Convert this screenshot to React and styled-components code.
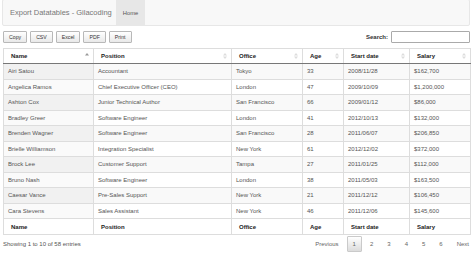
import React from "react";
import styled, { createGlobalStyle } from "styled-components";

const rows = [
  ["Airi Satou", "Accountant", "Tokyo", "33", "2008/11/28", "$162,700"],
  ["Angelica Ramos", "Chief Executive Officer (CEO)", "London", "47", "2009/10/09", "$1,200,000"],
  ["Ashton Cox", "Junior Technical Author", "San Francisco", "66", "2009/01/12", "$86,000"],
  ["Bradley Greer", "Software Engineer", "London", "41", "2012/10/13", "$132,000"],
  ["Brenden Wagner", "Software Engineer", "San Francisco", "28", "2011/06/07", "$206,850"],
  ["Brielle Williamson", "Integration Specialist", "New York", "61", "2012/12/02", "$372,000"],
  ["Brock Lee", "Customer Support", "Tampa", "27", "2011/01/25", "$112,000"],
  ["Bruno Nash", "Software Engineer", "London", "38", "2011/05/03", "$163,500"],
  ["Caesar Vance", "Pre-Sales Support", "New York", "21", "2011/12/12", "$106,450"],
  ["Cara Stevens", "Sales Assistant", "New York", "46", "2011/12/06", "$145,600"],
];

const columns = [
  { title: "Name", width: 90 },
  { title: "Position", width: 138 },
  { title: "Office", width: 71 },
  { title: "Age", width: 41 },
  { title: "Start date", width: 66 },
  { title: "Salary", width: 61 },
];

const GlobalStyle = createGlobalStyle`
  body {
    margin: 0;
    background: #fff;
    font-family: "Liberation Sans", Arial, sans-serif;
    color: #333;
  }
`;

const Page = styled.div`
  width: 474px;
  padding: 0 4px 0 2px;
  box-sizing: border-box;
`;

const Navbar = styled.nav`
  height: 27px;
  margin-top: -1px;
  display: flex;
  align-items: stretch;
  background: #f8f8f8;
  border: 1px solid #e7e7e7;
  border-radius: 2px;
  box-sizing: border-box;
`;

const Brand = styled.span`
  display: flex;
  align-items: center;
  padding: 0 4px 0 7px;
  font-size: 7.5px;
  color: #777;
`;

const NavItem = styled.span`
  display: flex;
  align-items: center;
  padding: 0 7px;
  font-size: 5.8px;
  color: #555;
  background: ${(p) => (p.active ? "#e7e7e7" : "transparent")};
`;

const Toolbar = styled.div`
  display: flex;
  align-items: center;
  justify-content: space-between;
  margin-top: 5px;
  padding-left: 1px;
`;

const ButtonGroup = styled.div`
  display: flex;
  gap: 3px;
`;

const ExportButton = styled.button`
  height: 12px;
  padding: 0 5px;
  font-family: inherit;
  font-size: 5.2px;
  color: #333;
  background: linear-gradient(to bottom, #ffffff 0%, #e9e9e9 100%);
  border: 1px solid #b8b8b8;
  border-radius: 1px;
  line-height: 10px;
`;

const Search = styled.label`
  display: flex;
  align-items: center;
  gap: 3px;
  font-size: 6px;
  font-weight: bold;
  color: #333;
`;

const SearchInput = styled.input`
  width: 79px;
  height: 12px;
  box-sizing: border-box;
  border: 1px solid #aaa;
  border-radius: 1px;
  padding: 0 2px;
  font-size: 6px;
`;

const Table = styled.table`
  margin-top: 5px;
  margin-left: 1px;
  width: 467px;
  table-layout: fixed;
  border-collapse: collapse;
  font-size: 6px;
`;

const HeadCell = styled.th`
  position: relative;
  height: 15px;
  padding: 0 10px 0 7px;
  text-align: left;
  font-weight: bold;
  color: #222;
  border-left: 1px solid #ddd;
  border-right: 1px solid #ddd;
  border-top: ${(p) => (p.foot ? "none" : "1px solid #ddd")};
  border-bottom: ${(p) => (p.foot ? "1px solid #ddd" : "1px solid #777")};
  box-sizing: border-box;
`;

const FootRow = styled.tr`
  border-top: 1px solid #777;
  th {
    height: 16px;
  }
`;

const SortIcon = styled.svg`
  position: absolute;
  right: 4px;
  top: 50%;
  margin-top: -3px;
`;

const Cell = styled.td`
  height: 15.5px;
  padding: 0 4px;
  color: #555;
  white-space: nowrap;
  overflow: hidden;
  border: 1px solid #ddd;
  box-sizing: border-box;
  background: ${(p) =>
    p.sorted ? (p.odd ? "#f1f1f1" : "#fafafa") : p.odd ? "#f9f9f9" : "#fff"};
`;

const Footer = styled.div`
  display: flex;
  align-items: center;
  justify-content: space-between;
  margin-top: 1px;
  padding-left: 1px;
  font-size: 6px;
  color: #555;
`;

const Pager = styled.div`
  display: flex;
  align-items: center;
  gap: 2px;
`;

const PageButton = styled.span`
  min-width: 6px;
  padding: 0 5px;
  height: 16px;
  line-height: 14px;
  box-sizing: border-box;
  text-align: center;
  color: #666;
  border: 1px solid ${(p) => (p.current ? "#cacaca" : "transparent")};
  border-radius: 1px;
  background: ${(p) =>
    p.current ? "linear-gradient(to bottom, #ffffff 0%, #dcdcdc 100%)" : "transparent"};

  &:last-child {
    padding-right: 0;
  }
`;

const SortArrows = ({ active }) => (
  <SortIcon width="4" height="6" viewBox="0 0 4 6">
    <path d="M2 0 L4 2.4 H0 Z" fill={active ? "#999" : "#ddd"} />
    {!active && <path d="M2 6 L4 3.6 H0 Z" fill="#ddd" />}
  </SortIcon>
);

export default function App() {
  return (
    <Page>
      <GlobalStyle />
      <Navbar>
        <Brand>Export Datatables - Gilacoding</Brand>
        <NavItem active>Home</NavItem>
      </Navbar>
      <Toolbar>
        <ButtonGroup>
          {["Copy", "CSV", "Excel", "PDF", "Print"].map((b) => (
            <ExportButton key={b}>{b}</ExportButton>
          ))}
        </ButtonGroup>
        <Search>
          Search:
          <SearchInput type="search" />
        </Search>
      </Toolbar>
      <Table>
        <colgroup>
          {columns.map((c) => (
            <col key={c.title} style={{ width: c.width }} />
          ))}
        </colgroup>
        <thead>
          <tr>
            {columns.map((c, i) => (
              <HeadCell key={c.title}>
                {c.title}
                <SortArrows active={i === 0} />
              </HeadCell>
            ))}
          </tr>
        </thead>
        <tbody>
          {rows.map((r, ri) => (
            <tr key={r[0]}>
              {r.map((v, ci) => (
                <Cell key={ci} odd={ri % 2 === 0} sorted={ci === 0}>
                  {v}
                </Cell>
              ))}
            </tr>
          ))}
        </tbody>
        <tfoot>
          <FootRow>
            {columns.map((c) => (
              <HeadCell key={c.title} foot>
                {c.title}
              </HeadCell>
            ))}
          </FootRow>
        </tfoot>
      </Table>
      <Footer>
        <span>Showing 1 to 10 of 58 entries</span>
        <Pager>
          <PageButton>Previous</PageButton>
          <PageButton current>1</PageButton>
          {["2", "3", "4", "5", "6"].map((n) => (
            <PageButton key={n}>{n}</PageButton>
          ))}
          <PageButton>Next</PageButton>
        </Pager>
      </Footer>
    </Page>
  );
}
